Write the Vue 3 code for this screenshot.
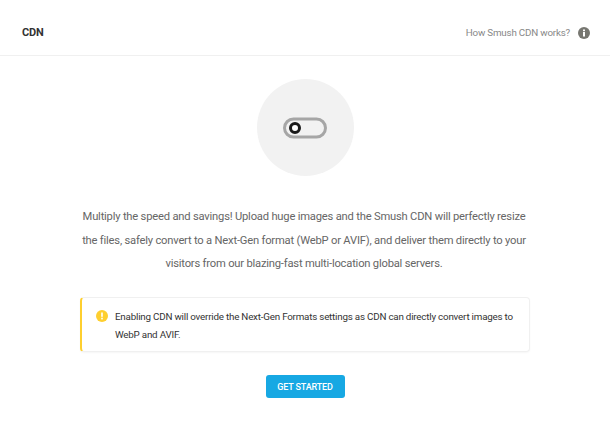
<template>
  <div class="page">
    <header class="box-header">
      <h2 class="box-title">CDN</h2>
      <div class="header-help">
        <span class="help-text">How Smush CDN works?</span>
        <svg class="help-icon" width="12" height="12" viewBox="0 0 12 12">
          <circle cx="6" cy="6" r="6" fill="#777771" />
          <rect x="5" y="5" width="2" height="4.5" fill="#fff" />
          <rect x="5" y="2.5" width="2" height="1.7" fill="#fff" />
        </svg>
      </div>
    </header>

    <main class="box-body">
      <div class="hero">
        <svg width="44" height="22" viewBox="0 0 44 22">
          <rect x="1.5" y="2" width="41" height="18" rx="9" fill="none" stroke="#a6a6a6" stroke-width="3" />
          <circle cx="12" cy="11" r="4.5" fill="#fff" stroke="#1a1a1a" stroke-width="3" />
        </svg>
      </div>

      <p class="intro">
        Multiply the speed and savings! Upload huge images and the Smush CDN will perfectly resize
        the files, safely convert to a Next-Gen format (WebP or AVIF), and deliver them directly to your
        visitors from our blazing-fast multi-location global servers.
      </p>

      <div class="notice">
        <svg class="notice-icon" width="12" height="12" viewBox="0 0 12 12">
          <circle cx="6" cy="6" r="6" fill="#fecf2f" />
          <rect x="5.2" y="2.5" width="1.6" height="4.3" fill="#fff" />
          <rect x="5.2" y="7.7" width="1.6" height="1.7" fill="#fff" />
        </svg>
        <p class="notice-text">
          Enabling CDN will override the Next-Gen Formats settings as CDN can directly convert images to
          WebP and AVIF.
        </p>
      </div>

      <button class="start-button" type="button">GET STARTED</button>
    </main>
  </div>
</template>

<script setup>
</script>

<style>
html,
body {
  margin: 0;
  background: #fff;
}
</style>

<style scoped>
.page {
  width: 610px;
  height: 423px;
  overflow: hidden;
  background: #fff;
  font-family: Roboto, "Liberation Sans", sans-serif;
  letter-spacing: -0.2px;
}

.box-header {
  height: 56px;
  box-sizing: border-box;
  padding: 10px 20px 0 22px;
  display: flex;
  align-items: center;
  justify-content: space-between;
  border-bottom: 1px solid #f0f0f0;
}

.box-title {
  margin: 0;
  font-size: 11px;
  line-height: 22px;
  font-weight: 700;
  color: #333;
}

.header-help {
  display: flex;
  align-items: center;
  gap: 8px;
}

.help-text {
  font-size: 9.8px;
  color: #888;
}

.box-body {
  display: flex;
  flex-direction: column;
  align-items: center;
  padding-top: 23px;
}

.hero {
  width: 97px;
  height: 97px;
  border-radius: 50%;
  background: #f2f2f2;
  display: flex;
  align-items: center;
  justify-content: center;
}

.intro {
  width: 452px;
  margin: 29px 2px 0 0;
  font-size: 11.2px;
  line-height: 23.5px;
  color: #666;
  text-align: center;
}

.notice {
  width: 450px;
  height: 55px;
  margin-top: 21.5px;
  box-sizing: border-box;
  display: flex;
  gap: 8px;
  padding: 10px 14px 0 14px;
  background: #fff;
  border: 1px solid #f0f0f0;
  border-left: 2px solid #fecf2f;
  border-radius: 4px;
  box-shadow: 0 1px 2px rgba(0, 0, 0, 0.04);
}

.notice-icon {
  flex: none;
  margin-top: 2px;
}

.notice-text {
  margin: 0 0 0 -1px;
  font-size: 9.8px;
  line-height: 17.5px;
  letter-spacing: -0.21px;
  color: #333;
}

.start-button {
  width: 79px;
  height: 23px;
  margin-top: 23px;
  padding: 0;
  border: 0;
  border-radius: 3px;
  background: #17a8e3;
  color: #fff;
  font-family: inherit;
  font-size: 9px;
  font-weight: 500;
  letter-spacing: -0.15px;
}
</style>
